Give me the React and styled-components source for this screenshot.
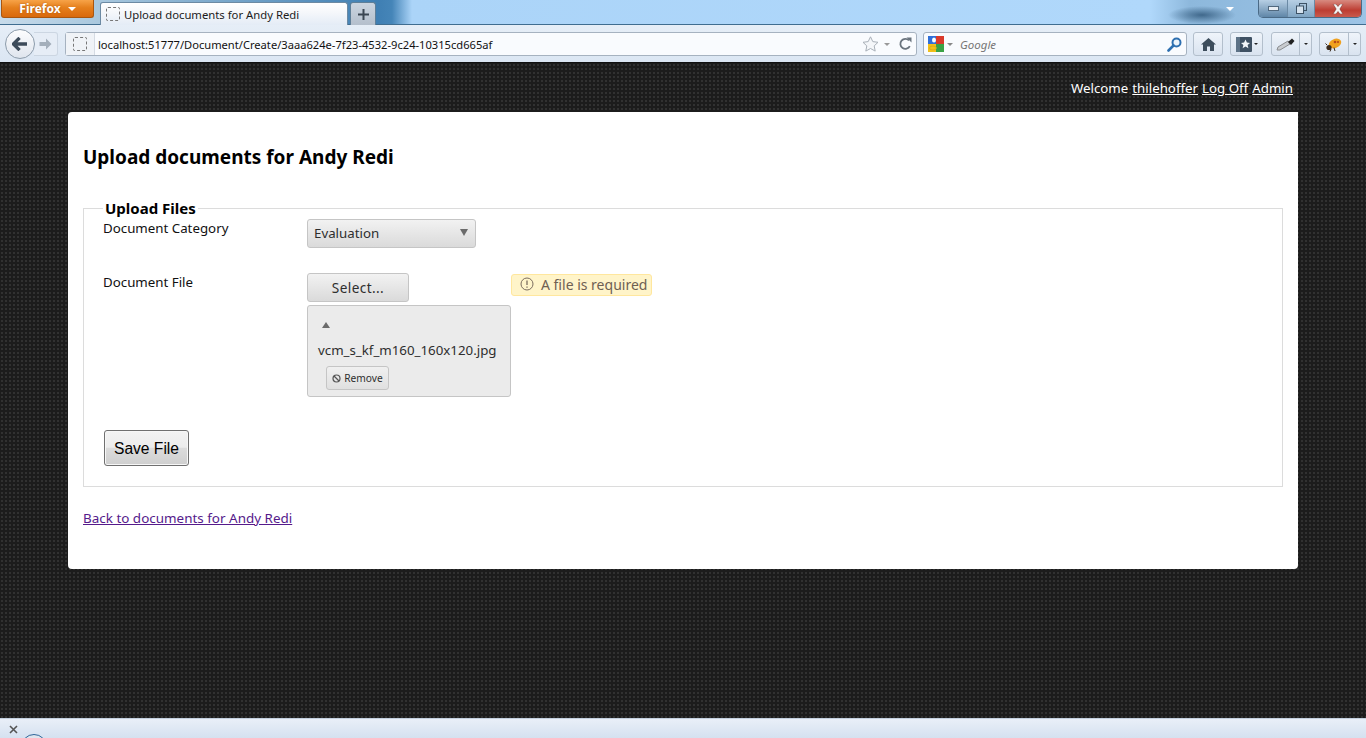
import React from "react";
import styled, { createGlobalStyle } from "styled-components";

const GlobalStyle = createGlobalStyle`
  html, body { margin: 0; padding: 0; height: 100%; overflow: hidden; }
  body { font-family: "Noto Sans", "Liberation Sans", sans-serif; }
`;

const Win = styled.div`
  display: flex;
  flex-direction: column;
  height: 100vh;
  overflow: hidden;
`;

const TabStrip = styled.div`
  display: flex;
  align-items: flex-start;
  height: 25px;
  box-sizing: border-box;
  padding-left: 1px;
  border-bottom: 1px solid #3f6d90;
  background:
    radial-gradient(ellipse 34px 9px at 1202px 15px, rgba(50, 90, 125, 0.85), transparent),
    linear-gradient(90deg, #c7dbea 0, #a9c8de 98px, #3f7fb3 378px, #4585b8 392px, #abd4f8 412px, #b0d8fb 1150px, #8db8dc 1190px, #9cc4e6 1366px);
`;

const FirefoxButton = styled.div`
  width: 93px;
  height: 18px;
  box-sizing: border-box;
  border: 1px solid #a9560f;
  border-top: 0;
  border-radius: 0 0 3px 3px;
  background: linear-gradient(#f7a348, #e57f1c 45%, #d9690c);
  color: #fff;
  font-size: 12px;
  font-weight: 700;
  line-height: 16px;
  text-shadow: 0 0 2px #a9560f;
  display: flex;
  align-items: center;
  justify-content: center;
  gap: 7px;
`;

const DownCaret = styled.span`
  width: 0;
  height: 0;
  border-left: ${(p) => p.$size || 3}px solid transparent;
  border-right: ${(p) => p.$size || 3}px solid transparent;
  border-top: ${(p) => p.$tall || p.$size || 3}px solid ${(p) => p.$color || "#333"};
`;

const Tab = styled.div`
  width: 248px;
  height: 23px;
  margin: 2px 0 0 6px;
  box-sizing: border-box;
  padding-left: 5px;
  border: 1px solid #6c8aa3;
  border-bottom: 0;
  border-radius: 3px 3px 0 0;
  background: linear-gradient(#fff, #f6f8fb 40%, #e4ecf6);
  display: flex;
  align-items: center;
  gap: 4px;
  font-size: 11.3px;
  color: #1c1c1c;
  white-space: nowrap;
`;

const BlankFavicon = styled.span`
  width: 12px;
  height: 12px;
  flex: none;
  border: 1px dashed #777;
  border-radius: 2px;
`;

const NewTab = styled.div`
  width: 26px;
  height: 23px;
  margin: 2px 0 0 2px;
  box-sizing: border-box;
  border: 1px solid #5f7f98;
  border-bottom: 0;
  border-radius: 3px 3px 0 0;
  background: linear-gradient(#ccd5e0, #b4bfcc);
  display: flex;
  align-items: center;
  justify-content: center;
`;

const StripCaret = styled.div`
  margin: 11px 0 0 auto;
`;

const WindowButtons = styled.div`
  display: flex;
  margin: 0 4px 0 24px;
  height: 18px;
  box-sizing: border-box;
  border: 1px solid #4a6a86;
  border-top: 0;
  border-radius: 0 0 5px 5px;
  overflow: hidden;
`;

const WindowButton = styled.div`
  width: ${(p) => p.$w}px;
  display: flex;
  align-items: center;
  justify-content: center;
  background: ${(p) => p.$bg};
  & + & { border-left: 1px solid #6b8aa5; }
`;

const NavBar = styled.div`
  display: flex;
  align-items: center;
  height: 37px;
  box-sizing: border-box;
  padding: 1px 0 0 5px;
  background: linear-gradient(#e6eef7, #dbe6f3);
  border-bottom: 0;
  flex: none;
`;

const BackCircle = styled.div`
  width: 30px;
  height: 30px;
  box-sizing: border-box;
  flex: none;
  border: 1px solid #8d9cab;
  border-radius: 50%;
  background: linear-gradient(#fdfdfe, #dfe5ee);
  display: flex;
  align-items: center;
  justify-content: center;
  position: relative;
  z-index: 1;
`;

const ForwardBox = styled.div`
  width: 24px;
  height: 24px;
  margin-left: -1px;
  flex: none;
  box-sizing: border-box;
  border: 1px solid #ccd6e2;
  border-left: 0;
  border-radius: 0 3px 3px 0;
  background: #e6edf6;
  display: flex;
  align-items: center;
  justify-content: center;
`;

const Field = styled.div`
  width: ${(p) => p.$w}px;
  height: 24px;
  margin-left: ${(p) => p.$ml}px;
  flex: none;
  box-sizing: border-box;
  border: 1px solid #a6b2c0;
  border-radius: 3px;
  background: #f9fbfe;
  display: flex;
  align-items: center;
  font-size: 11.15px;
  color: #111;
  white-space: nowrap;
`;

const IdentityBox = styled.div`
  width: 29px;
  height: 100%;
  flex: none;
  margin-right: 3px;
  box-sizing: border-box;
  padding-left: 7px;
  border-right: 1px solid #d5dbe3;
  background: #f0f3f7;
  display: flex;
  align-items: center;
`;

const UrlText = styled.span`
  flex: 1;
`;

const FieldIcon = styled.span`
  display: flex;
  align-items: center;
  margin: ${(p) => p.$m || "0"};
`;

const SearchHint = styled.span`
  flex: 1;
  margin-left: 7px;
  font-style: italic;
  color: #777;
  font-size: 11.5px;
`;

const ToolButton = styled.div`
  width: ${(p) => p.$w}px;
  height: 24px;
  margin-left: ${(p) => p.$ml}px;
  flex: none;
  box-sizing: border-box;
  border: 1px solid #b3bfcc;
  border-radius: 3px;
  background: linear-gradient(#eff4fa, #d9e3ef);
  display: flex;
  align-items: center;
`;

const ToolMain = styled.div`
  flex: 1;
  height: 100%;
  display: flex;
  align-items: center;
  justify-content: center;
  gap: 2px;
`;

const ToolDrop = styled.div`
  width: 11px;
  height: 100%;
  flex: none;
  border-left: 1px solid #b3bfcc;
  display: flex;
  align-items: center;
  justify-content: center;
`;

const Page = styled.div`
  flex: 1;
  min-height: 0;
  box-sizing: border-box;
  border-top: 1px solid #111;
  padding: 0 68px;
  background-color: #1c1c1c;
  background-image: radial-gradient(circle at 2px 2px, #3c3c3c 0.4px, #1c1c1c 1.3px);
  background-size: 4px 4px;
`;

const LoginBar = styled.div`
  height: 49px;
  box-sizing: border-box;
  padding: 16px 5px 0 0;
  display: flex;
  justify-content: flex-end;
  gap: 4px;
  font-size: 13.3px;
  line-height: 19px;
  color: #fff;
`;

const LoginLink = styled.a`
  color: #fff;
  text-decoration: underline;
`;

const Card = styled.div`
  height: 457px;
  box-sizing: border-box;
  padding: 0 15px;
  background: #fff;
  border-radius: 4px 0 4px 4px;
  color: #111;
  font-size: 13.3px;
`;

const Title = styled.h2`
  margin: 0;
  padding-top: 32px;
  height: 87px;
  box-sizing: border-box;
  font-size: 19px;
  line-height: 27px;
  font-weight: 700;
  color: #000;
`;

const Set = styled.fieldset`
  margin: 0;
  padding: 2px 19px 20px;
  border: 1px solid #dcdcdc;
  min-width: 0;
`;

const Legend = styled.legend`
  padding: 0 2px;
  font-size: 15px;
  line-height: 18px;
  font-weight: 700;
  color: #000;
`;

const FormRow = styled.div`
  display: grid;
  grid-template-columns: 204px 204px auto;
  justify-content: start;
  margin-bottom: ${(p) => p.$mb || 0}px;
`;

const FieldLabel = styled.label`
  line-height: 18px;
  color: #111;
`;

const Dropdown = styled.div`
  width: 169px;
  height: 29px;
  box-sizing: border-box;
  padding: 0 7px 2px 6px;
  border: 1px solid #c5c5c5;
  border-radius: 3px;
  background: linear-gradient(#f2f2f2, #dadada);
  display: flex;
  align-items: center;
  justify-content: space-between;
  color: #2e2e2e;
`;

const FileButton = styled.div`
  width: 102px;
  height: 29px;
  box-sizing: border-box;
  padding-bottom: 1px;
  border: 1px solid #c5c5c5;
  border-radius: 3px;
  background: linear-gradient(#f2f2f2, #dadada);
  display: flex;
  align-items: center;
  justify-content: center;
  color: #2e2e2e;
  font-size: 13.6px;
  letter-spacing: 0.4px;
`;

const FileList = styled.div`
  height: 92px;
  margin-top: 3px;
  box-sizing: border-box;
  padding: 16px 0 0 10px;
  border: 1px solid #c5c5c5;
  border-radius: 3px;
  background: #ebebeb;
  color: #2e2e2e;
`;

const UpCaret = styled.div`
  width: 0;
  height: 0;
  margin-left: 4px;
  border-left: 4px solid transparent;
  border-right: 4px solid transparent;
  border-bottom: 6px solid #6b6b6b;
`;

const FileName = styled.div`
  margin-top: 13px;
  line-height: 19px;
  white-space: nowrap;
`;

const RemoveButton = styled.div`
  width: 63px;
  height: 24px;
  margin: 6px 0 0 8px;
  box-sizing: border-box;
  border: 1px solid #c5c5c5;
  border-radius: 3px;
  background: linear-gradient(#f0f0f0, #e0e0e0);
  display: flex;
  align-items: center;
  justify-content: center;
  gap: 3px;
  font-size: 10.2px;
`;

const Notice = styled.div`
  align-self: start;
  height: 22px;
  margin-top: 1px;
  box-sizing: border-box;
  padding: 0 4px 2px 8px;
  border: 1px solid #ffe79e;
  border-radius: 3px;
  background: #fff4c9;
  display: flex;
  align-items: center;
  gap: 7px;
  color: #6f6053;
  font-size: 14px;
  white-space: nowrap;
`;

const SaveButton = styled.button`
  display: block;
  width: 85px;
  height: 36px;
  margin: 33px 0 0 1px;
  padding: 1px 0 0;
  border: 1px solid #707070;
  border-radius: 3px;
  background: linear-gradient(#f3f3f3 0, #ececec 48%, #dcdcdc 50%, #cfcfcf 100%);
  box-shadow: inset 0 0 0 1px #f7f7f7;
  font-family: "Liberation Sans", Arial, sans-serif;
  font-size: 15.6px;
  color: #000;
`;

const BackLink = styled.a`
  display: inline-block;
  margin-top: 22px;
  font-size: 13.45px;
  line-height: 19px;
  color: #551a8b;
  text-decoration: underline;
`;

const StatusBar = styled.div`
  height: 20px;
  flex: none;
  box-sizing: border-box;
  overflow: hidden;
  padding: 6px 0 0 9px;
  border-top: 1px solid #c3d0df;
  display: flex;
  gap: 3px;
  background: linear-gradient(#e9eff8, #d5e1f0);
`;

const AddonCircle = styled.div`
  width: 26px;
  height: 26px;
  margin-top: 9px;
  flex: none;
  box-sizing: border-box;
  border: 1px solid #2f6699;
  border-radius: 50%;
  background: #dfe5ee;
`;

const App = () => (
  <>
    <GlobalStyle />
    <Win>
      <TabStrip>
        <FirefoxButton>
          Firefox <DownCaret $size={4} $color="#fff" />
        </FirefoxButton>
        <Tab>
          <BlankFavicon />
          <span>Upload documents for Andy Redi</span>
        </Tab>
        <NewTab>
          <svg width="11" height="11" viewBox="0 0 11 11">
            <path d="M4.5 0h2v4.5H11v2H6.5V11h-2V6.5H0v-2h4.5z" fill="#3b4652" />
          </svg>
        </NewTab>
        <StripCaret>
          <DownCaret $size={4} $color="#fff" />
        </StripCaret>
        <WindowButtons>
          <WindowButton $w={28} $bg="linear-gradient(#b7cfe4, #5f86a8)">
            <svg width="11" height="5" viewBox="0 0 11 5">
              <rect x="0.5" y="0.5" width="10" height="4" fill="#e8eef4" stroke="#50687e" />
            </svg>
          </WindowButton>
          <WindowButton $w={26} $bg="linear-gradient(#b7cfe4, #7fa4c3)">
            <svg width="11" height="11" viewBox="0 0 11 11">
              <rect x="3.5" y="0.5" width="7" height="7" fill="none" stroke="#3d5266" />
              <rect x="0.5" y="3" width="7" height="7.5" fill="#d5e2ee" stroke="#3d5266" />
            </svg>
          </WindowButton>
          <WindowButton $w={46} $bg="linear-gradient(#d88a80, #bd3d32 60%, #c95a4d)">
            <svg width="12" height="10" viewBox="0 0 12 10">
              <path d="M1 0h3l2 2.5L8 0h3L7.8 5 11 10H8L6 7.5 4 10H1l3.2-5z" fill="#f4f4f4" stroke="#6e2a24" strokeWidth="0.5" />
            </svg>
          </WindowButton>
        </WindowButtons>
      </TabStrip>

      <NavBar>
        <BackCircle>
          <svg width="16" height="14" viewBox="0 0 18 16">
            <path d="M8.5 1 1.5 8l7 7M2.5 8H17" fill="none" stroke="#3d4b5a" strokeWidth="3.8" strokeLinejoin="round" />
          </svg>
        </BackCircle>
        <ForwardBox>
          <svg width="13" height="12" viewBox="0 0 13 12">
            <path d="M7 0.5 12.5 6 7 11.5V8H0.5V4H7z" fill="#a4afbb" />
          </svg>
        </ForwardBox>
        <Field $w={852} $ml={7}>
          <IdentityBox>
            <BlankFavicon />
          </IdentityBox>
          <UrlText>localhost:51777/Document/Create/3aaa624e-7f23-4532-9c24-10315cd665af</UrlText>
          <FieldIcon $m="0 5px 0 0">
            <svg width="17" height="16" viewBox="0 0 17 16">
              <path d="M8.5 0.8 10.8 5.6l5.2 0.7-3.8 3.6 1 5.2-4.7-2.6-4.7 2.6 1-5.2L1 6.3l5.2-0.7z" fill="#f4f6f9" stroke="#a9b0b8" />
            </svg>
          </FieldIcon>
          <FieldIcon $m="0 9px 0 0">
            <DownCaret $size={3} $color="#999" />
          </FieldIcon>
          <FieldIcon $m="0 4px 0 0">
            <svg width="13" height="14" viewBox="0 0 13 14">
              <path d="M10.8 9.2A5 5 0 1 1 10 3.4" fill="none" stroke="#6a747e" strokeWidth="1.8" />
              <path d="M7.5 0.5h5v5z" fill="#6a747e" />
            </svg>
          </FieldIcon>
        </Field>
        <Field $w={264} $ml={6}>
          <FieldIcon $m="0 0 0 4px">
            <svg width="16" height="16" viewBox="0 0 16 16">
              <rect width="8" height="8" fill="#2f6fd8" />
              <rect x="8" width="8" height="8" fill="#d93a2b" />
              <rect y="8" width="8" height="8" fill="#f2c019" />
              <rect x="8" y="8" width="8" height="8" fill="#3aa245" />
              <ellipse cx="6" cy="4" rx="2" ry="2.5" fill="#fff" />
              <ellipse cx="5" cy="12" rx="3.5" ry="2" fill="#f2c019" stroke="#c79a10" strokeWidth="0.5" />
            </svg>
          </FieldIcon>
          <FieldIcon $m="0 0 0 3px">
            <DownCaret $size={3} $color="#888" />
          </FieldIcon>
          <SearchHint>Google</SearchHint>
          <FieldIcon $m="0 4px 0 0">
            <svg width="15" height="15" viewBox="0 0 15 15">
              <circle cx="9.5" cy="5.5" r="4" fill="#eaf3fb" stroke="#2d6fb0" strokeWidth="2" />
              <path d="M6.5 8.5 1.5 13.5" stroke="#2d6fb0" strokeWidth="2.6" strokeLinecap="round" />
            </svg>
          </FieldIcon>
        </Field>
        <ToolButton $w={30} $ml={6}>
          <ToolMain>
            <svg width="15" height="13" viewBox="0 0 15 13">
              <path d="M7.5 0 15 6.5h-2V13H9V8.5H6V13H2V6.5H0z" fill="#3d4d5c" />
            </svg>
          </ToolMain>
        </ToolButton>
        <ToolButton $w={33} $ml={7}>
          <ToolMain>
            <svg width="16" height="15" viewBox="0 0 16 15">
              <rect width="16" height="15" rx="1" fill="#3f5163" />
              <rect width="4" height="15" fill="#5d7286" />
              <path d="M9.5 2.5 10.9 5.6l3.1 0.3-2.4 2.1 0.8 3.2-2.9-1.7-2.9 1.7 0.8-3.2L5 5.9l3.1-0.3z" fill="#f2f5f8" />
            </svg>
            <DownCaret $size={2} $color="#222" />
          </ToolMain>
        </ToolButton>
        <ToolButton $w={41} $ml={8}>
          <ToolMain>
            <svg width="20" height="14" viewBox="0 0 20 14">
              <path d="M1 13 2 10 12 4l2 3-10 6z" fill="#c9ccd0" stroke="#8a8d90" />
              <path d="M12 5 16 1.5l2.5 2.5-3.5 4z" fill="#222" />
            </svg>
          </ToolMain>
          <ToolDrop>
            <DownCaret $size={2} $color="#222" />
          </ToolDrop>
        </ToolButton>
        <ToolButton $w={42} $ml={7}>
          <ToolMain>
            <svg width="18" height="15" viewBox="0 0 18 15">
              <ellipse cx="10" cy="6.5" rx="6.5" ry="4.5" fill="#f0a11f" transform="rotate(-25 10 6.5)" />
              <circle cx="10" cy="5" r="1.3" fill="#b5481a" />
              <circle cx="13" cy="5" r="1.1" fill="#b5481a" />
              <circle cx="4" cy="10.5" r="2.6" fill="#3a2a1c" />
              <path d="M6 12l-1 2.5M9 10.5l1 3.5M2 8 0.5 6.5" stroke="#3a2a1c" fill="none" />
            </svg>
          </ToolMain>
          <ToolDrop>
            <DownCaret $size={2} $color="#222" />
          </ToolDrop>
        </ToolButton>
      </NavBar>

      <Page>
        <LoginBar>
          <span>Welcome</span>
          <LoginLink>thilehoffer</LoginLink>
          <LoginLink>Log Off</LoginLink>
          <LoginLink>Admin</LoginLink>
        </LoginBar>
        <Card>
          <Title>Upload documents for Andy Redi</Title>
          <Set>
            <Legend>Upload Files</Legend>
            <FormRow $mb={25}>
              <FieldLabel>Document Category</FieldLabel>
              <Dropdown>
                Evaluation <DownCaret $size={4} $tall={7} $color="#6b6b6b" />
              </Dropdown>
            </FormRow>
            <FormRow>
              <FieldLabel>Document File</FieldLabel>
              <div>
                <FileButton>Select...</FileButton>
                <FileList>
                  <UpCaret />
                  <FileName>vcm_s_kf_m160_160x120.jpg</FileName>
                  <RemoveButton>
                    <svg width="9" height="9" viewBox="0 0 9 9">
                      <circle cx="4.5" cy="4.5" r="3.5" fill="none" stroke="#555" strokeWidth="1.2" />
                      <path d="M2 2l5 5" stroke="#555" strokeWidth="1.2" />
                    </svg>
                    Remove
                  </RemoveButton>
                </FileList>
              </div>
              <Notice>
                <svg width="14" height="14" viewBox="0 0 14 14">
                  <circle cx="7" cy="7" r="6" fill="none" stroke="#7c6d5f" />
                  <path d="M7 3.5V8M7 9.5v1.2" stroke="#7c6d5f" strokeWidth="1.3" />
                </svg>
                A file is required
              </Notice>
            </FormRow>
            <SaveButton type="button">Save File</SaveButton>
          </Set>
          <BackLink>Back to documents for Andy Redi</BackLink>
        </Card>
      </Page>

      <StatusBar>
        <svg width="9" height="9" viewBox="0 0 9 9">
          <path d="M1 1l7 7M8 1 1 8" stroke="#555" strokeWidth="1.6" />
        </svg>
        <AddonCircle />
      </StatusBar>
    </Win>
  </>
);

export default App;
